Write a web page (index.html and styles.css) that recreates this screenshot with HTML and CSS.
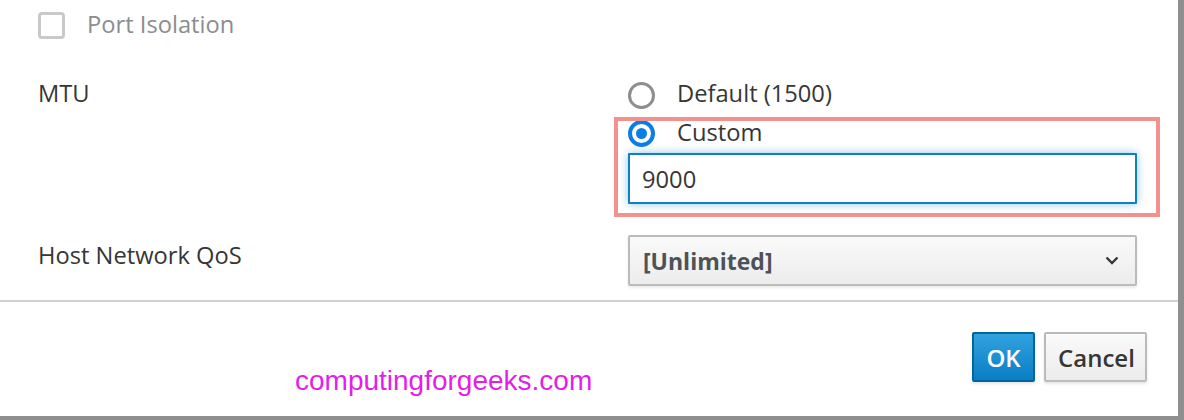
FILE: index.html
```html
<!DOCTYPE html>
<html lang="en">
<head>
  <meta charset="UTF-8" />
  <title>Logical Network - MTU</title>
  <link rel="stylesheet" href="styles.css">
</head>
<body>

  <div class="dialog">

    <!-- form fields -->
    <div class="form">
      <div class="check-row">
        <span class="checkbox"></span>
        <span class="check-label">Port Isolation</span>
      </div>

      <div class="row mtu-row">
        <div class="label">MTU</div>
        <div class="field">
          <div class="option">
            <span class="radio"></span>
            <span>Default (1500)</span>
          </div>
          <div class="option option-custom">
            <span class="radio checked"></span>
            <span>Custom</span>
          </div>
          <input class="text-input" type="text" value="9000" />
          <!-- annotation box drawn over the screenshot -->
          <div class="highlight"></div>
        </div>
      </div>

      <div class="row qos-row">
        <div class="label label-qos">Host Network QoS</div>
        <div class="field">
          <div class="select">
            <span>[Unlimited]</span>
            <svg width="14" height="9" viewBox="0 0 14 9">
              <path d="M1.5 1.5 L7 7 L12.5 1.5" fill="none" stroke="#363636" stroke-width="2.4" />
            </svg>
          </div>
        </div>
      </div>
    </div>

    <!-- footer with buttons -->
    <div class="footer">
      <div class="watermark">computingforgeeks.com</div>
      <button class="btn btn-primary">OK</button>
      <button class="btn btn-default">Cancel</button>
    </div>

  </div>

</body>
</html>
```

FILE: styles.css
```css
* {
  margin: 0;
  padding: 0;
  box-sizing: border-box;
}

body {
  background: #fff;
  font-family: 'Open Sans', sans-serif;
  font-size: 23.7px;
  line-height: 32px;
  color: #363636;
}

.dialog {
  width: 1184px;
  height: 420px;
  border-right: 6px solid #8f8f8f;
  border-bottom: 4px solid #8f8f8f;
  display: flex;
  flex-direction: column;
}

.form {
  padding-left: 38px;
}

.check-row {
  margin-top: 8px;
  height: 32px;
  display: flex;
  align-items: center;
  gap: 22px;
}

.checkbox {
  width: 27px;
  height: 27px;
  border: 3px solid #c9c9c9;
  border-radius: 4px;
  margin-top: 2px;
}

.check-label {
  color: #8b8d8f;
}

.row {
  display: grid;
  grid-template-columns: 590px 509px;
}

.mtu-row {
  margin-top: 37px;
}

.field {
  position: relative;
}

.option {
  display: flex;
  align-items: center;
  gap: 22px;
  height: 32px;
}

.option-custom {
  margin-top: 7px;
}

.radio {
  width: 27px;
  height: 27px;
  border: 3px solid #8e8e8e;
  border-radius: 50%;
  margin-top: 5px;
  display: flex;
  align-items: center;
  justify-content: center;
}

.radio.checked {
  border: 4px solid #0b7ee6;
  margin-top: 3px;
}

.radio.checked::after {
  content: '';
  width: 11px;
  height: 11px;
  border-radius: 50%;
  background: #0b7ee6;
}

.text-input {
  display: block;
  margin-top: 5px;
  width: 509px;
  height: 51px;
  border: 2px solid #0f80c2;
  border-radius: 1px;
  padding: 0 12px;
  font-family: 'Open Sans', sans-serif;
  font-size: 23.7px;
  color: #363636;
  box-shadow: 0 0 9px rgba(0, 136, 206, 0.45);
  outline: none;
}

.highlight {
  position: absolute;
  left: -14px;
  top: 40px;
  width: 546px;
  height: 100px;
  border: 4px solid #f4908e;
  pointer-events: none;
}

.qos-row {
  margin-top: 31px;
}

.label-qos {
  padding-top: 4px;
}

.select {
  height: 51px;
  border: 2px solid #bbb;
  border-radius: 2px;
  background: linear-gradient(#fafafa, #ececec);
  box-shadow: 0 2px 3px rgba(0, 0, 0, 0.08);
  display: flex;
  align-items: center;
  justify-content: space-between;
  padding: 0 16px 0 13px;
  font-size: 23px;
  font-weight: 700;
  color: #4d5258;
}

.footer {
  margin-top: 14px;
  border-top: 2px solid #d1d1d1;
  flex: 1;
  position: relative;
  display: flex;
  justify-content: flex-end;
  align-items: flex-start;
  gap: 9px;
  padding: 30px 31px 0 0;
}

.watermark {
  position: absolute;
  left: 295px;
  top: 63px;
  font-family: 'Liberation Sans', Arial, sans-serif;
  font-size: 28px;
  line-height: 32px;
  color: #e41ee6;
}

.btn {
  height: 50px;
  border-radius: 2px;
  font-family: 'Open Sans', sans-serif;
  font-size: 24px;
  font-weight: 600;
  padding: 0 12px;
  box-shadow: 0 2px 3px rgba(0, 0, 0, 0.1);
}

.btn-primary {
  width: 63px;
  background: linear-gradient(#31a2e0, #0a7ec4);
  border: 2px solid #00659c;
  color: #fff;
}

.btn-default {
  width: 103px;
  background: linear-gradient(#fafafa, #ececec);
  border: 2px solid #bbb;
  color: #363636;
}
```
